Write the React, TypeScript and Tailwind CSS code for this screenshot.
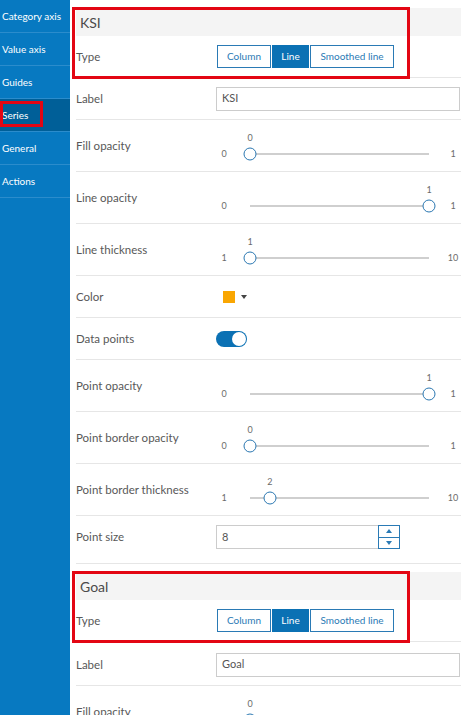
import React from "react";

const navItems = ["Category axis", "Value axis", "Guides", "Series", "General", "Actions"];

const Slider = ({ min, max, value }: { min: number; max: number; value: number }) => {
  const left = ((value - min) / (max - min)) * 179;
  return (
    <div className="flex flex-col text-[#6b6b6b]">
      <div className="relative ml-[34px] h-[16px] w-[179px]">
        <span
          className="absolute top-0 -translate-x-1/2 text-[9px] leading-[16px]"
          style={{ left }}
        >
          {value}
        </span>
      </div>
      <div className="flex h-[16px] items-center text-[9px]">
        <span className="w-[16px] text-center">{min}</span>
        <div className="relative ml-[18px] h-[2px] w-[179px] bg-[#cfcfcf]">
          <span
            className="absolute top-1/2 h-[13px] w-[13px] -translate-x-1/2 -translate-y-1/2 rounded-full border-[1.5px] border-[#2a77b1] bg-white"
            style={{ left }}
          />
        </div>
        <span className="ml-[16px] w-[16px] text-center">{max}</span>
      </div>
    </div>
  );
};

const Row = ({
  label,
  tall,
  children,
}: {
  label: string;
  tall?: boolean;
  children?: React.ReactNode;
}) => (
  <div
    className={`flex shrink-0 items-center border-b border-[#e6e6e6] ${tall ? "h-[52px]" : "h-[42px]"}`}
  >
    <span className="w-[140px] text-[11.5px] text-[#585858]">{label}</span>
    <div className="flex flex-1 items-center">{children}</div>
  </div>
);

const TypeButtons = () => (
  <div className="ml-[1px] flex h-[23px] gap-[1px] text-[10px]">
    <span className="flex w-[54px] items-center justify-center border border-[#2a7ab5] text-[#2a7ab5]">
      Column
    </span>
    <span className="flex w-[37px] items-center justify-center border border-[#0b71b4] bg-[#0b71b4] text-white">
      Line
    </span>
    <span className="flex w-[84px] items-center justify-center border border-[#2a7ab5] text-[#2a7ab5]">
      Smoothed line
    </span>
  </div>
);

const SeriesHeader = ({ name }: { name: string }) => (
  <div className="relative">
    <div className="flex h-[28px] items-center bg-[#f4f4f4] pl-[4px] text-[14px] text-[#4a4a4a]">
      {name}
    </div>
    <Row label="Type">
      <TypeButtons />
    </Row>
    {/* highlight box */}
    <div className="pointer-events-none absolute left-[-4px] top-[-1px] h-[72px] w-[338px] border-[3px] border-[#e30613]" />
  </div>
);

const LabelInput = ({ value }: { value: string }) => (
  <div className="mr-[1px] flex h-[24px] flex-1 items-center border border-[#cccccc] pl-[5px] text-[11px] text-[#555]">
    {value}
  </div>
);

export default function App() {
  return (
    <div
      className="flex h-[715px] w-[468px] overflow-hidden bg-white"
      style={{ fontFamily: "Lato, 'Open Sans', sans-serif" }}
    >
      {/* Sidebar */}
      <div className="flex w-[70px] shrink-0 flex-col bg-[#0779c1]">
        {navItems.map((item) => (
          <div
            key={item}
            className={`relative flex h-[33px] shrink-0 items-center border-b border-[#2b8ccc] pl-[2px] text-[10px] text-white ${
              item === "Series" ? "bg-[#005f98]" : ""
            }`}
          >
            {item}
            {item === "Series" && (
              <span className="pointer-events-none absolute left-0 top-[2px] h-[26px] w-[43px] border-[3px] border-[#e30613]" />
            )}
          </div>
        ))}
      </div>

      {/* Main */}
      <div className="min-w-0 flex-1 pl-[6px] pr-[7px] pt-[8px]">
        <SeriesHeader name="KSI" />
        <Row label="Label">
          <LabelInput value="KSI" />
        </Row>
        <Row label="Fill opacity" tall>
          <Slider min={0} max={1} value={0} />
        </Row>
        <Row label="Line opacity" tall>
          <Slider min={0} max={1} value={1} />
        </Row>
        <Row label="Line thickness" tall>
          <Slider min={1} max={10} value={1} />
        </Row>
        <Row label="Color">
          <span className="ml-[7px] h-[12px] w-[12px] bg-[#f9a602]" />
          <span className="ml-[6px] h-0 w-0 border-x-[3.5px] border-t-[4px] border-x-transparent border-t-[#444]" />
        </Row>
        <Row label="Data points">
          <span className="relative h-[16px] w-[31px] rounded-full bg-[#0b71b4]">
            <span className="absolute right-[1px] top-[1px] h-[14px] w-[14px] rounded-full bg-white" />
          </span>
        </Row>
        <Row label="Point opacity" tall>
          <Slider min={0} max={1} value={1} />
        </Row>
        <Row label="Point border opacity" tall>
          <Slider min={0} max={1} value={0} />
        </Row>
        <Row label="Point border thickness" tall>
          <Slider min={1} max={10} value={2} />
        </Row>
        <div className="flex h-[48px] items-start border-b border-[#e6e6e6] pt-[9px]">
          <span className="flex h-[24px] w-[140px] items-center text-[11.5px] text-[#585858]">
            Point size
          </span>
          <div className="flex h-[24px] w-[184px] items-stretch border border-r-0 border-[#cccccc]">
            <span className="flex flex-1 items-center pl-[5px] text-[11px] text-[#555]">8</span>
            <div className="-my-[1px] flex w-[22px] flex-col border border-[#2a7ab5]">
              <span className="flex flex-1 items-center justify-center border-b border-[#2a7ab5]">
                <span className="h-0 w-0 border-x-[3px] border-b-[4px] border-x-transparent border-b-[#2a7ab5]" />
              </span>
              <span className="flex flex-1 items-center justify-center">
                <span className="h-0 w-0 border-x-[3px] border-t-[4px] border-x-transparent border-t-[#2a7ab5]" />
              </span>
            </div>
          </div>
        </div>

        <div className="pt-[8px]">
          <SeriesHeader name="Goal" />
        </div>
        <div className="pt-[2px]">
          <Row label="Label">
            <LabelInput value="Goal" />
          </Row>
          <Row label="Fill opacity" tall>
            <Slider min={0} max={1} value={0} />
          </Row>
        </div>
      </div>
    </div>
  );
}
